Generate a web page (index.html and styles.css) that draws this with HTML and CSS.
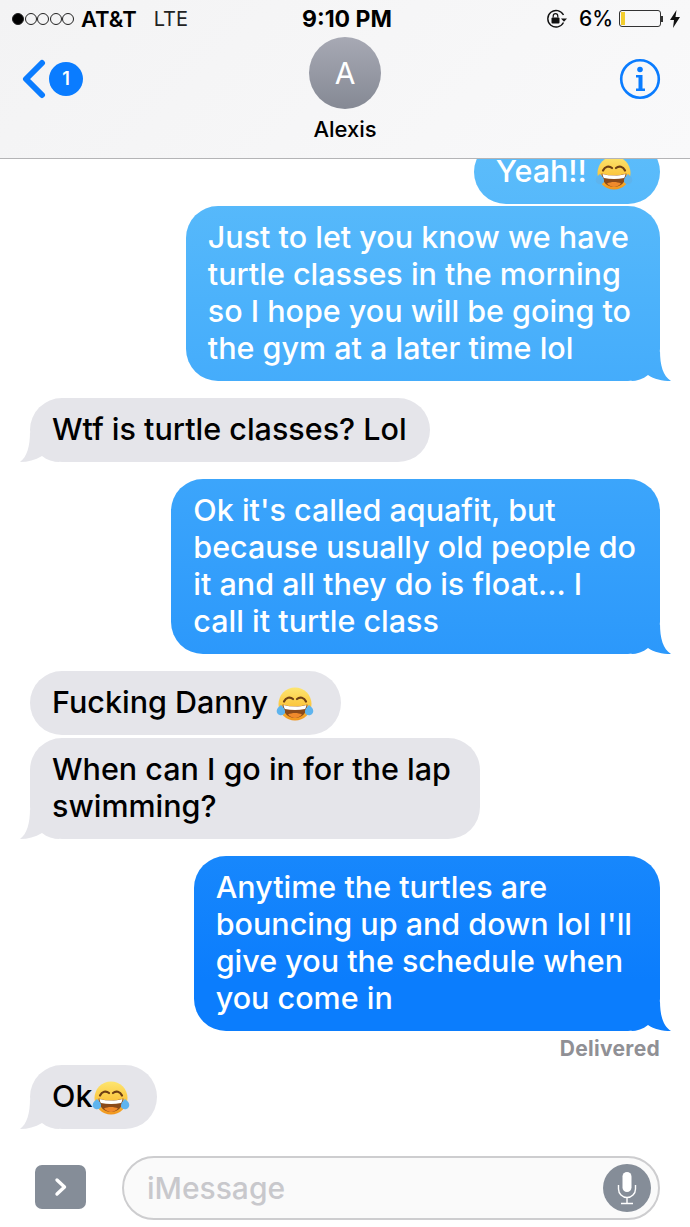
FILE: index.html
```html
<!DOCTYPE html>
<html lang="en">
<head>
  <meta charset="UTF-8" />
  <title>Alexis - Messages</title>
  <link rel="stylesheet" href="styles.css">
</head>
<body>
  <!-- shared emoji drawing -->
  <svg class="svg-defs" aria-hidden="true">
    <defs>
      <linearGradient id="faceFill" x1="0" y1="0" x2="0" y2="1">
        <stop offset="0" stop-color="#fde56f" />
        <stop offset="0.6" stop-color="#fbc43c" />
        <stop offset="1" stop-color="#f0931c" />
      </linearGradient>
      <symbol id="laughCry" viewBox="0 0 38 36">
        <circle cx="19" cy="18" r="16.500" fill="url(#faceFill)" />
        <path d="M8 15.500c2-4 6-5 9-2.500M30 15.500c-2-4-6-5-9-2.500" fill="none" stroke="#6e3f14" stroke-width="2.200" stroke-linecap="round" />
        <path d="M6.500 18.500c8 2.500 17 2.500 25 0C31 27 26 32 19 32S7 27 6.500 18.500z" fill="#8a4a1a" />
        <path d="M12 28.500c4-2 10-2 14 0-2 2.200-4.500 3.500-7 3.500s-5-1.300-7-3.500z" fill="#f08a2c" />
        <path d="M7.500 19c7.500 2 15.500 2 23 0-.3 1.800-.7 3-1.400 4-6.600 1.300-13.600 1.300-20.200 0-.7-1-1.100-2.200-1.400-4z" fill="#fff" />
        <path d="M5 19c2.500 2 4.500 5 4 7.500C8.500 29 5.500 30 3 28.800.5 27.500.2 24.500 1.500 22.500 2.300 21.200 3.800 20 5 19z" fill="#5eb4ee" />
        <path d="M33 19c-2.500 2-4.500 5-4 7.500.5 2.500 3.500 3.500 6 2.300 2.500-1.300 2.800-4.300 1.500-6.300-.8-1.300-2.300-2.500-3.500-3.500z" fill="#5eb4ee" />
      </symbol>
    </defs>
  </svg>

  <header class="top-bar">
    <div class="status-bar">
      <div class="status-left">
        <span class="signal">
          <i class="dot dot-on"></i><i class="dot"></i><i class="dot"></i><i class="dot"></i><i class="dot"></i>
        </span>
        <span class="carrier">AT&amp;T</span>
        <span class="network">LTE</span>
      </div>
      <div class="clock">9:10 PM</div>
      <div class="status-right">
        <svg class="lock-icon" viewBox="0 0 22 20">
          <path d="M17.500 13.500A8.300 8.300 0 1 1 17.500 6" fill="none" stroke="#111" stroke-width="1.400" />
          <path d="M15 9.500h6l-3 3.200z" fill="#111" />
          <rect x="5.500" y="8.500" width="8" height="6" rx="1" fill="#111" />
          <path d="M7.200 8.500V7a2.300 2.300 0 0 1 4.600 0v1.500" fill="none" stroke="#111" stroke-width="1.200" />
        </svg>
        <span class="battery-text">6%</span>
        <span class="battery"><span class="battery-level"></span></span>
        <span class="battery-nub"></span>
        <svg class="bolt-icon" viewBox="0 0 10 18">
          <path d="M6.500 0 0 10h4l-1 8 7-11H5.500z" fill="#111" />
        </svg>
      </div>
    </div>
    <div class="nav-bar">
      <div class="nav-back">
        <svg class="back-icon" viewBox="0 0 25 40">
          <path d="M20.500 4 4.500 20l16 16" fill="none" stroke="#0a7cff" stroke-width="6" stroke-linecap="round" stroke-linejoin="round" />
        </svg>
        <span class="badge">1</span>
      </div>
      <div class="contact">
        <div class="avatar">A</div>
        <div class="contact-name">Alexis</div>
      </div>
      <div class="nav-info">
        <svg class="info-icon" viewBox="0 0 42 42">
          <circle cx="21" cy="21" r="18.800" fill="none" stroke="#0a7cff" stroke-width="2.600" />
          <circle cx="21" cy="11.500" r="2.800" fill="#0a7cff" />
          <path d="M17 17h6.500v13.500H26V33h-9v-2.500h2.500v-11H17z" fill="#0a7cff" />
        </svg>
      </div>
    </div>
  </header>

  <main class="thread">
    <div class="bubble bubble-out no-tail first pad-27">Yeah!! <svg class="emoji"><use href="#laughCry" /></svg></div>
    <div class="bubble bubble-out tight pad-29">Just to let you know we have<br>turtle classes in the morning<br>so I hope you will be going to<br>the gym at a later time lol</div>
    <div class="bubble bubble-in">Wtf is turtle classes? Lol</div>
    <div class="bubble bubble-out pad-24">Ok it's called aquafit, but<br>because usually old people do<br>it and all they do is float... I<br>call it turtle class</div>
    <div class="bubble bubble-in no-tail pad-27">Fucking Danny <svg class="emoji"><use href="#laughCry" /></svg></div>
    <div class="bubble bubble-in tighter pad-29">When can I go in for the lap<br>swimming?</div>
    <div class="bubble bubble-out pad-28">Anytime the turtles are<br>bouncing up and down lol I'll<br>give you the schedule when<br>you come in</div>
    <div class="delivered">Delivered</div>
    <div class="bubble bubble-in after-delivered pad-27">Ok<svg class="emoji"><use href="#laughCry" /></svg></div>
  </main>

  <footer class="compose">
    <div class="apps-btn">
      <svg viewBox="0 0 14 20" class="apps-icon">
        <path d="M3 3l7.500 7L3 17" fill="none" stroke="#fff" stroke-width="3.400" stroke-linecap="round" stroke-linejoin="round" />
      </svg>
    </div>
    <div class="compose-field">
      <span class="placeholder">iMessage</span>
      <div class="mic-btn">
        <svg viewBox="0 0 24 34" class="mic-icon">
          <rect x="7.500" y="1" width="9" height="20" rx="4.500" fill="#fff" />
          <path d="M3.500 14v4a8.500 8.500 0 0 0 17 0v-4M12 26.500V32M6 32.500h12" fill="none" stroke="#fff" stroke-width="1.400" />
        </svg>
      </div>
    </div>
  </footer>
</body>
</html>
```

FILE: styles.css
```css
* {
  box-sizing: border-box;
  margin: 0;
  padding: 0;
}

body {
  width: 690px;
  height: 1227px;
  overflow: hidden;
  background-color: #fff;
  color: #000;
  font-family: 'Inter', 'Liberation Sans', sans-serif;
}

.svg-defs {
  position: absolute;
  width: 0;
  height: 0;
}

/* Header */
.top-bar {
  position: relative;
  z-index: 2;
  height: 159px;
  background: linear-gradient(135deg, #f3f3f4, #f9f9fa);
  border-bottom: 1px solid #b4b4b6;
}

.status-bar {
  display: grid;
  grid-template-columns: 1fr auto 1fr;
  align-items: center;
  height: 37px;
  padding: 0 10px 0 12px;
  font-size: 22px;
}

.status-left {
  display: flex;
  align-items: center;
}

.signal {
  display: flex;
  gap: 0.5px;
  margin-right: 7px;
}

.dot {
  width: 12px;
  height: 12px;
  border: 1px solid #222;
  border-radius: 50%;
}

.dot-on {
  background: #000;
}

.carrier {
  font-weight: 600;
}

.network {
  margin-left: 17px;
  font-size: 20px;
  color: #222;
}

.clock {
  padding-left: 2px;
  font-size: 23px;
  font-weight: 700;
}

.status-right {
  display: flex;
  align-items: center;
  justify-content: flex-end;
}

.lock-icon {
  width: 22px;
  height: 20px;
}

.battery-text {
  margin-left: 11px;
  font-size: 21px;
  font-weight: 500;
}

.battery {
  width: 42px;
  height: 17px;
  margin-left: 6px;
  padding: 1px;
  border: 1px solid #333;
  border-radius: 3px;
}

.battery-level {
  display: block;
  width: 4px;
  height: 100%;
  background: #f2cd2e;
}

.battery-nub {
  width: 2px;
  height: 6px;
  margin-right: 7px;
  background: #333;
}

.bolt-icon {
  width: 10px;
  height: 18px;
}

.nav-bar {
  display: grid;
  grid-template-columns: 1fr auto 1fr;
  padding: 0 29px 0 21px;
}

.nav-back {
  display: flex;
  align-items: center;
  gap: 2px;
  height: 84px;
}

.back-icon {
  width: 26px;
  height: 40px;
}

.badge {
  width: 34px;
  height: 34px;
  border-radius: 50%;
  background: #0a7cff;
  color: #fff;
  font-size: 18px;
  font-weight: 600;
  line-height: 34px;
  text-align: center;
}

.contact {
  margin-left: 4px;
  margin-right: -4px;
  text-align: center;
}

.avatar {
  width: 72px;
  height: 72px;
  margin: 0 auto;
  border-radius: 50%;
  background: linear-gradient(#a7a9b4, #858994);
  color: #fff;
  font-size: 30px;
  line-height: 72px;
}

.contact-name {
  margin-top: 7px;
  font-size: 22px;
  font-weight: 500;
  line-height: 26px;
}

.nav-info {
  display: flex;
  align-items: center;
  justify-content: flex-end;
  height: 84px;
}

.info-icon {
  width: 42px;
  height: 42px;
}

/* Messages */
.thread {
  display: flex;
  flex-direction: column;
  padding: 0 30px;
}

.bubble {
  position: relative;
  width: fit-content;
  margin-top: 17px;
  padding: 12px 23px 15px 22px;
  border-radius: 32px;
  font-size: 30.500px;
  font-weight: 500;
  line-height: 37px;
  white-space: nowrap;
}

.pad-24 {
  padding-right: 24px;
}

.pad-27 {
  padding-right: 27px;
}

.pad-28 {
  padding-right: 28px;
}

.pad-29 {
  padding-right: 29px;
}

.bubble-out {
  align-self: flex-end;
  color: #fff;
  background: linear-gradient(#6cc7fa 0, #4cb2fb 300px, #2f9bfb 620px, #0b7dfd 980px) fixed;
}

.bubble-in {
  align-self: flex-start;
  background: #e5e5ea;
}

.bubble::after {
  content: "";
  position: absolute;
  bottom: 0;
  width: 40px;
  height: 30px;
  background: inherit;
}

.bubble-out::after {
  right: -11px;
  clip-path: path("M29 0C29 14 32 25 40 30C31 30 23 28 17 24C12 28 6 30 0 30Z");
}

.bubble-in::after {
  left: -10px;
  clip-path: path("M10 0C10 14 7 25 0 30C8 30 15 28 22 24C27 28 33 30 40 30Z");
}

.bubble.no-tail::after {
  display: none;
}

.first {
  margin-top: -19px;
}

.tight {
  margin-top: 2px;
}

.tighter {
  margin-top: 3px;
}

.after-delivered {
  margin-top: 7px;
}

/* negative margins keep the line box at 37px */
.emoji {
  width: 38px;
  height: 36px;
  margin: -6px 0;
  vertical-align: -3px;
}

.delivered {
  align-self: flex-end;
  margin-top: 8px;
  margin-bottom: -1px;
  color: #909095;
  font-size: 21px;
  font-weight: 700;
  line-height: 20px;
  letter-spacing: 0.3px;
}

/* Compose bar */
.compose {
  display: flex;
  align-items: center;
  gap: 36px;
  padding: 27px 30px 0 35px;
}

.apps-btn {
  display: flex;
  align-items: center;
  justify-content: center;
  width: 51px;
  height: 44px;
  margin-bottom: 3px;
  border-radius: 7px;
  background: #858d98;
}

.apps-icon {
  width: 14px;
  height: 20px;
}

.compose-field {
  display: flex;
  flex: 1;
  align-items: center;
  justify-content: space-between;
  height: 64px;
  padding: 0 7px 0 23px;
  border: 2px solid #cdcdcf;
  border-radius: 32px;
  background: #fafafa;
}

.placeholder {
  color: #c8c8cc;
  font-size: 30px;
  font-weight: 500;
}

.mic-btn {
  display: flex;
  align-items: center;
  justify-content: center;
  width: 48px;
  height: 48px;
  border-radius: 50%;
  background: #858d98;
}

.mic-icon {
  width: 24px;
  height: 34px;
}
```
